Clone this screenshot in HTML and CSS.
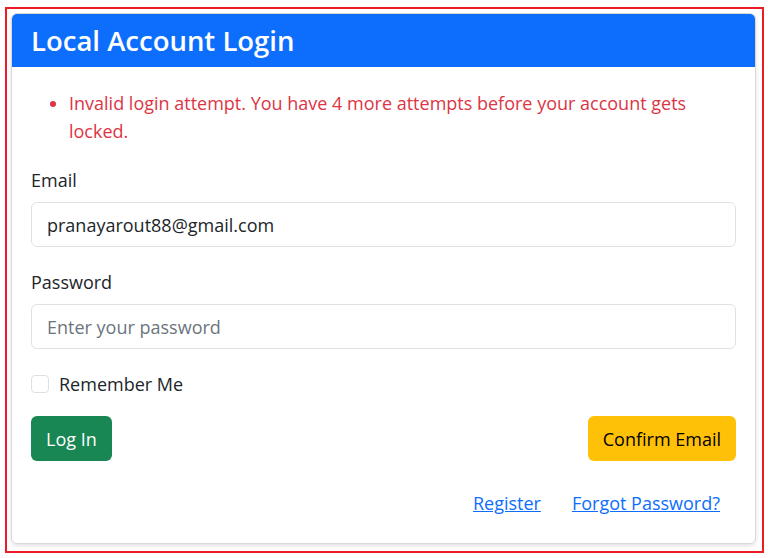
FILE: index.html
```html
<!DOCTYPE html>
<html lang="en">
<head>
    <meta charset="UTF-8">
    <meta name="viewport" content="width=device-width, initial-scale=1.0">
    <title>Local Account Login</title>
    <link rel="stylesheet" href="styles.css">
</head>
<body>
    <div class="frame">
        <div class="card">
            <div class="card-header">
                <h2>Local Account Login</h2>
            </div>
            <div class="card-body">
                <ul class="errors">
                    <li>Invalid login attempt. You have 4 more attempts before your account gets locked.</li>
                </ul>
                <form id="loginForm">
                    <div class="field">
                        <label for="email">Email</label>
                        <input type="email" id="email" value="pranayarout88@gmail.com">
                    </div>
                    <div class="field">
                        <label for="password">Password</label>
                        <input type="password" id="password" placeholder="Enter your password">
                    </div>
                    <div class="check-row">
                        <input type="checkbox" id="remember">
                        <label for="remember">Remember Me</label>
                    </div>
                    <div class="actions">
                        <button type="submit" class="btn btn-success">Log In</button>
                        <button type="button" class="btn btn-warning">Confirm Email</button>
                    </div>
                    <div class="links">
                        <a href="#">Register</a>
                        <a href="#">Forgot Password?</a>
                    </div>
                </form>
            </div>
        </div>
    </div>
</body>
</html>
```
FILE: styles.css
```css
body {
    font-family: "Open Sans", "Noto Sans", sans-serif;
    font-size: 18px;
    line-height: 28px;
    color: #212529;
    margin: 0;
    background-color: #fff;
}
.frame {
    margin: 7px 0 0 5px;
    border: 2px solid #ed1c24;
    padding: 4px 6px 0 4px;
    box-sizing: border-box;
    width: 759px;
    height: 546px;
}
.card {
    border: 1px solid #d9d9d9;
    border-radius: 6px;
    box-shadow: 0 2px 4px rgba(0, 0, 0, 0.12);
    height: 531px;
    box-sizing: border-box;
    overflow: hidden;
}
.card-header {
    background-color: #0d6efd;
    color: #fff;
    height: 53px;
    padding: 0 19px;
    display: flex;
    align-items: center;
}
.card-header h2 {
    margin: 0;
    font-size: 27.5px;
    font-weight: 600;
    line-height: 32px;
}
.card-body {
    padding: 22px 19px 0;
}
.errors {
    color: #dc3545;
    margin: 0 0 21px;
    padding-left: 38px;
}
.field {
    margin-bottom: 21px;
}
.field label {
    display: block;
    margin-bottom: 8px;
}
.field input {
    display: block;
    width: 100%;
    box-sizing: border-box;
    height: 45px;
    padding: 0 15px;
    font: inherit;
    color: #212529;
    border: 1px solid #dee2e6;
    border-radius: 6px;
}
.field input::placeholder {
    color: #6c757d;
}
.check-row {
    display: flex;
    align-items: center;
    gap: 10px;
    height: 28px;
    margin-bottom: 18px;
}
.check-row input {
    appearance: none;
    width: 18px;
    height: 18px;
    margin: 0;
    border: 1px solid #dee2e6;
    border-radius: 4px;
}
.actions {
    display: flex;
    justify-content: space-between;
    margin-bottom: 28px;
}
.btn {
    font: inherit;
    height: 45px;
    padding: 0 15px;
    border: none;
    border-radius: 6px;
    cursor: pointer;
}
.btn-success {
    background-color: #198754;
    color: #fff;
}
.btn-warning {
    background-color: #ffc107;
    color: #000;
}
.links {
    display: flex;
    justify-content: flex-end;
    gap: 31px;
    padding-right: 16px;
}
.links a {
    color: #0d6efd;
}
```
